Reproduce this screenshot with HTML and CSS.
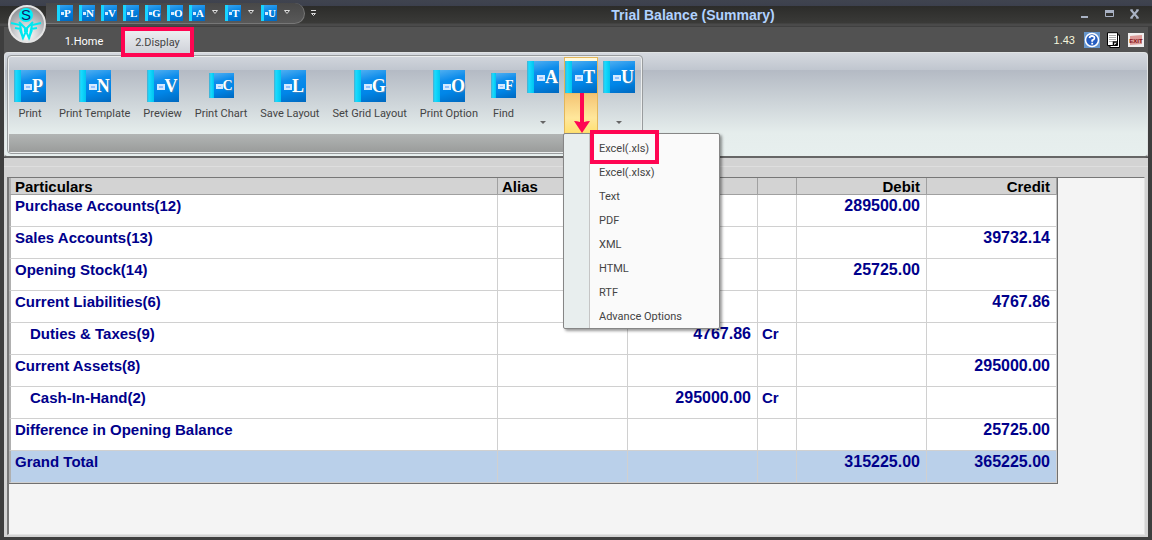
FILE: index.html
```html
<!DOCTYPE html>
<html lang="en">
<head>
    <meta charset="UTF-8">
    <meta name="viewport" content="width=device-width, initial-scale=1.0">
    <title>Trial Balance (Summary)</title>
    <link rel="stylesheet" href="styles.css">
</head>
<body>
    <div class="window">
        <header class="titlebar">
            <button class="orb" aria-label="Application menu">
                <svg width="38" height="38" viewBox="0 0 38 38">
                    <defs>
                        <radialGradient id="orbFill" cx="50%" cy="80%" r="80%">
                            <stop offset="0" stop-color="#ffffff"/>
                            <stop offset="0.5" stop-color="#c4c6c9"/>
                            <stop offset="1" stop-color="#85878b"/>
                        </radialGradient>
                    </defs>
                    <circle cx="19" cy="19" r="18" fill="url(#orbFill)" stroke="#e4e4e4" stroke-width="2"/>
                    <ellipse cx="18" cy="10" rx="7" ry="7" fill="#00f0f8"/>
                    <text x="18" y="15" text-anchor="middle" class="orb-letter">S</text>
                    <path d="M3 18L12 20L15 34 M33 18L24 20L21 34 M7 23L13 24 M29 23L23 24 M11 17L17 23V27 M25 17L19 23V27 M12 25L15 33L18 26L21 33L24 25" fill="none" stroke="#00e8f0" stroke-width="2"/>
                </svg>
            </button>
            <nav class="quick">
                <button class="book small">P</button>
                <button class="book small">N</button>
                <button class="book small">V</button>
                <button class="book small">L</button>
                <button class="book small">G</button>
                <button class="book small">O</button>
                <button class="book small">A</button>
                <button class="caret" aria-label="A options"><svg width="8" height="5" viewBox="0 0 8 5"><path d="M1.500 .5H6.500L4 3.500Z" fill="#444" stroke="#ddd"/></svg></button>
                <button class="book small">T</button>
                <button class="caret" aria-label="T options"><svg width="8" height="5" viewBox="0 0 8 5"><path d="M1.500 .5H6.500L4 3.500Z" fill="#444" stroke="#ddd"/></svg></button>
                <button class="book small">U</button>
                <button class="caret" aria-label="U options"><svg width="8" height="5" viewBox="0 0 8 5"><path d="M1.500 .5H6.500L4 3.500Z" fill="#444" stroke="#ddd"/></svg></button>
            </nav>
            <button class="customize" aria-label="Customize toolbar">
                <svg width="7" height="7" viewBox="0 0 7 7"><path d="M1 .5H6 M1.500 3.500H5.500L3.500 5.500Z" fill="none" stroke="#ddd"/></svg>
            </button>
            <h1>Trial Balance (Summary)</h1>
            <div class="controls">
                <button aria-label="Minimize"><svg width="11" height="10" viewBox="0 0 11 10"><path d="M2 8H9" stroke="#a9b2c4" stroke-width="2"/></svg></button>
                <button aria-label="Restore"><svg width="11" height="10" viewBox="0 0 11 10"><path d="M1 2.500H10" stroke="#a9b2c4" stroke-width="3"/><path d="M1.500 3V7.500H9.500V3" fill="none" stroke="#a9b2c4"/></svg></button>
                <button aria-label="Close"><svg width="11" height="10" viewBox="0 0 11 10"><path d="M2 1L9 9M9 1L2 9" stroke="#a9b2c4" stroke-width="2"/><path d="M1 1H4M7 1H10M1 9H4M7 9H10" stroke="#a9b2c4"/></svg></button>
            </div>
        </header>

        <div class="tabs">
            <button class="tab">1.Home</button>
            <button class="tab active">2.Display</button>
            <div class="tools">
                <span class="version">1.43</span>
                <button aria-label="Help">
                    <svg width="16" height="16" viewBox="0 0 16 16">
                        <rect width="16" height="16" fill="#6796cc"/>
                        <circle cx="8" cy="8" r="6.500" fill="#245cc0" stroke="#fff" stroke-width="1.500"/>
                        <path d="M5.500 6.200Q5.800 3.800 8.200 4Q11 4.300 10.300 6.600Q9.800 7.600 8.200 8.300V9.800 M8.200 10.800V12.500" fill="none" stroke="#fff" stroke-width="1.800"/>
                    </svg>
                </button>
                <button aria-label="Notes">
                    <svg width="16" height="16" viewBox="0 0 16 16">
                        <path d="M4 3H13.500V15.500H4Z" fill="#fff" stroke="#000"/>
                        <path d="M1.500 .7H11.500V13.500H1.500Z" fill="#fff" stroke="#000"/>
                        <path d="M3 3.500H10M3 5.500H10M3 7.500H10M3 9.500H7" stroke="#aaa"/>
                        <path d="M7.500 13.500V10H11.500" fill="#fff" stroke="#000" stroke-width="1.500"/>
                        <path d="M8 13.500L11.500 10V13.500Z"/>
                    </svg>
                </button>
                <button aria-label="Exit">
                    <svg width="16" height="14" viewBox="0 0 16 14">
                        <rect width="16" height="14" fill="#f0eeee"/>
                        <path d="M2 3L14 2V11L2 12Z" fill="#dc9a98"/>
                        <text x="8" y="10" text-anchor="middle" class="exit-text">EXIT</text>
                    </svg>
                </button>
            </div>
        </div>

        <section class="ribbon">
            <div class="group">
                <div class="items">
                    <button class="item"><span class="book">P</span>Print</button>
                    <button class="item"><span class="book">N</span>Print Template</button>
                    <button class="item"><span class="book">V</span>Preview</button>
                    <button class="item"><span class="book medium">C</span>Print Chart</button>
                    <button class="item"><span class="book">L</span>Save Layout</button>
                    <button class="item"><span class="book">G</span>Set Grid Layout</button>
                    <button class="item"><span class="book">O</span>Print Option</button>
                    <button class="item"><span class="book medium">F</span>Find</button>
                    <div class="splits">
                        <button class="split" aria-label="A"><span class="book">A</span><i class="drop"></i></button>
                        <div class="export">
                            <button class="split open" aria-label="Export">
                                <span class="book">T</span>
                            </button>
                            <svg class="arrow" width="16" height="40" viewBox="0 0 16 40"><path d="M6 0H10V29Q13 28 16 28L8 40L0 28Q3 28 6 29Z" fill="#ff0552"/></svg>
                            <div class="menu">
                                <button class="marked">Excel(.xls)</button>
                                <button>Excel(.xlsx)</button>
                                <button>Text</button>
                                <button>PDF</button>
                                <button>XML</button>
                                <button>HTML</button>
                                <button>RTF</button>
                                <button>Advance Options</button>
                            </div>
                        </div>
                        <button class="split" aria-label="U"><span class="book">U</span><i class="drop"></i></button>
                    </div>
                </div>
                <div class="group-footer"></div>
            </div>
        </section>

        <main class="workspace">
            <div class="grid">
                <table>
                    <colgroup>
                        <col class="particulars"><col class="wide"><col class="wide"><col class="type"><col class="wide"><col class="wide">
                    </colgroup>
                    <thead>
                        <tr><th>Particulars</th><th>Alias</th><th></th><th></th><th class="right">Debit</th><th class="right">Credit</th></tr>
                    </thead>
                    <tbody>
                        <tr><td>Purchase Accounts(12)</td><td></td><td class="num"></td><td></td><td class="num">289500.00</td><td class="num"></td></tr>
                        <tr><td>Sales Accounts(13)</td><td></td><td class="num"></td><td></td><td class="num"></td><td class="num">39732.14</td></tr>
                        <tr><td>Opening Stock(14)</td><td></td><td class="num"></td><td></td><td class="num">25725.00</td><td class="num"></td></tr>
                        <tr><td>Current Liabilities(6)</td><td></td><td class="num"></td><td></td><td class="num"></td><td class="num">4767.86</td></tr>
                        <tr><td class="sub">Duties &amp; Taxes(9)</td><td></td><td class="num">4767.86</td><td>Cr</td><td class="num"></td><td class="num"></td></tr>
                        <tr><td>Current Assets(8)</td><td></td><td class="num"></td><td></td><td class="num"></td><td class="num">295000.00</td></tr>
                        <tr><td class="sub">Cash-In-Hand(2)</td><td></td><td class="num">295000.00</td><td>Cr</td><td class="num"></td><td class="num"></td></tr>
                        <tr><td>Difference in Opening Balance</td><td></td><td class="num"></td><td></td><td class="num"></td><td class="num">25725.00</td></tr>
                        <tr class="total"><td>Grand Total</td><td></td><td class="num"></td><td></td><td class="num">315225.00</td><td class="num">365225.00</td></tr>
                    </tbody>
                </table>
            </div>
        </main>
    </div>
</body>
</html>
```
FILE: styles.css
```css
*,
*::after {
    box-sizing: border-box;
}
body {
    margin: 0;
    font-family: Roboto, "Liberation Sans", sans-serif;
    font-size: 11px;
    color: #444;
}
button {
    border: 0;
    padding: 0;
    background: none;
    font: inherit;
    color: inherit;
}
svg {
    display: block;
}
.window {
    display: flex;
    flex-direction: column;
    height: 100vh;
    background: #525252;
    border: solid #3e3e3e;
    border-width: 0 4px 3px;
}

/* title bar */
.titlebar {
    position: relative;
    display: flex;
    align-items: center;
    flex: none;
    height: 26px;
    margin: 0 -4px;
    padding: 0 12px 0 46px;
    background: linear-gradient(#40444f 0, #3c404d 6px, #2c2c2a 6px, #3a3a38 23px, #4a4a4a 24px);
}
.orb {
    position: absolute;
    left: 8px;
    top: 5px;
    z-index: 1;
}
.orb-letter {
    font: 15px "Liberation Sans", sans-serif;
    fill: #10206a;
}
.quick {
    display: flex;
    align-items: center;
    gap: 6px;
    height: 21px;
    padding: 0 13px 0 11px;
    border: solid #777;
    border-width: 0 1px 1px 0;
    border-radius: 0 11px 11px 0;
    background: linear-gradient(#484848, #595959);
}
.customize {
    margin-left: 5px;
}
h1 {
    flex: 1;
    margin: 0;
    padding: 3px 10px 0 0;
    font: bold 14px/16px "Liberation Sans", Arial, sans-serif;
    text-align: center;
    color: #b1d2ff;
}
.controls {
    display: flex;
    gap: 14px;
    padding-top: 2px;
}

/* book-shaped icons with a letter on the cover */
.book {
    display: flex;
    align-items: center;
    flex: none;
    width: 32px;
    height: 32px;
    padding-left: 18px;
    background:
        linear-gradient(#8fc0ff, #8fc0ff) 12px 16px / 4px 2px no-repeat,
        linear-gradient(#d4e9ff, #d4e9ff) 10px 14px / 8px 6px no-repeat,
        linear-gradient(90deg, #4fa9cc 0, #18dcff 2px, #00c4f0 7px, transparent 7px),
        linear-gradient(165deg, #58b4f2 0, #0d8ceb 35%, #0086e8 65%, #0068be);
    font: bold 18px "Liberation Serif", serif;
    color: #fff;
    text-shadow: 1px 1px 1px #4485bb;
}
.book.medium {
    width: 25px;
    height: 25px;
    padding-left: 14px;
    background:
        linear-gradient(#8fc0ff, #8fc0ff) 9px 13px / 3px 1px no-repeat,
        linear-gradient(#d4e9ff, #d4e9ff) 7px 11px / 7px 5px no-repeat,
        linear-gradient(90deg, #4fa9cc 0, #18dcff 2px, #00c4f0 5px, transparent 5px),
        linear-gradient(165deg, #58b4f2 0, #0d8ceb 35%, #0086e8 65%, #0068be);
    font-size: 14px;
}
.book.small {
    width: 16px;
    height: 16px;
    padding-left: 7px;
    background:
        linear-gradient(#d4e9ff, #d4e9ff) 4px 7px / 3px 3px no-repeat,
        linear-gradient(90deg, #18d4ff 3px, transparent 3px),
        linear-gradient(165deg, #3ba6f2, #0080e0 50%, #0068be);
    font-size: 11px;
    text-shadow: none;
}

/* tab strip */
.tabs {
    display: flex;
    flex: none;
    height: 26px;
    padding: 0 4px 0 47px;
    border-top: 1px solid #404040;
}
.tab {
    width: 66px;
    padding-top: 4px;
    color: #fff;
}
.tab.active {
    position: relative;
    z-index: 1;
    width: 73px;
    height: 30px;
    margin-left: 4px;
    padding: 0;
    border: 4px solid #ff0552;
    background: linear-gradient(#eceef1, #cfd2d9);
    color: #444;
}
.tools {
    display: flex;
    align-items: center;
    gap: 6px;
    margin-left: auto;
}
.version {
    margin-right: 3px;
    font-family: "Liberation Sans", sans-serif;
    color: #f5f5dc;
}
.exit-text {
    font: bold 6px "Liberation Sans", sans-serif;
    fill: #861115;
}

/* ribbon */
.ribbon {
    position: relative;
    flex: none;
    padding: 3px;
    border: 1px solid #e0e3e4;
    border-bottom: 2px solid #666;
    border-radius: 4px;
    background: linear-gradient(#d5d9df 0, #c0c6cf 17px, #b4bac4 17px, #e5edec 80px, #e7efee);
}
.group {
    width: fit-content;
    border: 1px solid #eceeee;
    border-radius: 3px;
    outline: 1px solid #999c9e;
}
.items {
    display: flex;
    gap: 13px;
    height: 77px;
    padding: 0 5px;
}
.item {
    display: flex;
    flex-direction: column;
    align-items: center;
    justify-content: space-between;
    height: 51px;
    margin-top: 13px;
    line-height: 14px;
    white-space: nowrap;
}
.item .medium {
    margin-top: 3px;
}
.group-footer {
    height: 18px;
    background: linear-gradient(#b2b5b4, #9a9c9b);
}
.splits {
    display: flex;
    gap: 4px;
    margin-left: -3px;
}
.split {
    display: flex;
    flex-direction: column;
    align-items: center;
    justify-content: space-between;
    width: 34px;
    height: 67px;
    padding-top: 4px;
}
.drop {
    border: solid transparent;
    border-width: 3px 3px 0;
    border-top-color: #666;
}
.export {
    position: relative;
}
.split.open {
    justify-content: flex-start;
    height: 77px;
    padding-top: 3px;
    border: 1px solid #e3b75a;
    background: linear-gradient(#fff8dc 34px, #d6a648 34px, #f4c474 36px, #ffe79b 60px, #ffe070);
}
.arrow {
    position: absolute;
    left: 10px;
    top: 36px;
}
.menu {
    position: absolute;
    z-index: 2;
    left: -1px;
    top: 76px;
    display: flex;
    flex-direction: column;
    width: 157px;
    padding: 2px 1px 0;
    border: 1px solid #868686;
    border-radius: 2px;
    background: linear-gradient(90deg, #e8eeee 25px, #c5c5c5 25px, #c5c5c5 26px, #fafafa 26px);
    box-shadow: 2px 2px 3px rgba(0, 0, 0, 0.4);
}
.menu button {
    position: relative;
    height: 24px;
    padding-left: 34px;
    text-align: left;
}
.menu .marked::after {
    content: "";
    position: absolute;
    left: 25px;
    top: -6px;
    width: 69px;
    height: 34px;
    border: 4px solid #ff0552;
}

/* report grid */
.workspace {
    display: flex;
    flex: 1;
    min-height: 0;
    padding: 19px 3px 2px;
    background: linear-gradient(#d3d3d3 8px, #dedede 8px, #dedede 9px, #d3d3d3 9px);
}
.grid {
    flex: 1;
    overflow: hidden;
    border: 1px solid #e3e3e3;
    border-top: 1px solid #777;
    border-left: 2px solid #777;
    background: #f4f4f4;
}
table {
    width: 1049px;
    table-layout: fixed;
    border-collapse: separate;
    border-spacing: 0;
    border: solid #707070;
    border-width: 0 1px 1px 0;
    background: #fff;
    font: bold 15px "Liberation Sans", Arial, sans-serif;
    color: #00008b;
}
.particulars {
    width: 489px;
}
.wide {
    width: 130px;
}
.type {
    width: 39px;
}
th,
td {
    padding: 2px 6px 0 4px;
    border: solid #d0d0d0;
    border-width: 0 1px 1px 0;
    text-align: left;
    vertical-align: top;
    line-height: 17px;
    white-space: nowrap;
}
th {
    height: 17px;
    padding-top: 1px;
    border-color: #a0a0a0;
    background: #d3d3d3;
    line-height: 15px;
    color: #000;
}
td {
    height: 32px;
}
th:first-child,
td:first-child {
    padding-left: 4px;
    border-left: 2px solid #b0b0b0;
}
td.sub:first-child {
    padding-left: 19px;
}
.right,
.num {
    text-align: right;
}
.num {
    font-size: 16px;
}
.total td {
    background: #bad0ea;
}
```
